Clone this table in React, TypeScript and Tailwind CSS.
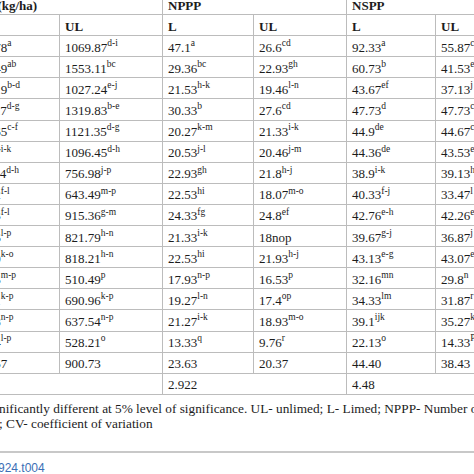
type Cell = [string, string?];

const rows: Cell[][] = [
  [["1580.78", "a"], ["1069.87", "d-i"], ["47.1", "a"], ["26.6", "cd"], ["92.33", "a"], ["55.87", "c"]],
  [["1437.49", "ab"], ["1553.11", "bc"], ["29.36", "bc"], ["22.93", "gh"], ["60.73", "b"], ["41.53", "e"]],
  [["1309.19", "b-d"], ["1027.24", "e-j"], ["21.53", "h-k"], ["19.46", "l-n"], ["43.67", "ef"], ["37.13", "j"]],
  [["1191.27", "d-g"], ["1319.83", "b-e"], ["30.33", "b"], ["27.6", "cd"], ["47.73", "d"], ["47.73", "c"]],
  [["1227.65", "c-f"], ["1121.35", "d-g"], ["20.27", "k-m"], ["21.33", "i-k"], ["44.9", "de"], ["44.67", "c"]],
  [["983.17", "i-k"], ["1096.45", "d-h"], ["20.53", "j-l"], ["20.46", "j-m"], ["44.36", "de"], ["43.53", "e"]],
  [["1112.54", "d-h"], ["756.98", "j-p"], ["22.93", "gh"], ["21.8", "h-j"], ["38.9", "i-k"], ["39.13", "h"]],
  [["836.42", "f-l"], ["643.49", "m-p"], ["22.53", "hi"], ["18.07", "m-o"], ["40.33", "f-j"], ["33.47", "l"]],
  [["858.13", "f-l"], ["915.36", "g-m"], ["24.33", "fg"], ["24.8", "ef"], ["42.76", "e-h"], ["42.26", "e"]],
  [["712.36", "l-p"], ["821.79", "h-n"], ["21.33", "i-k"], ["18nop"], ["39.67", "g-j"], ["36.87", "j"]],
  [["784.90", "k-o"], ["818.21", "h-n"], ["22.53", "hi"], ["21.93", "h-j"], ["43.13", "e-g"], ["43.07", "e"]],
  [["621.55", "m-p"], ["510.49", "p"], ["17.93", "n-p"], ["16.53", "p"], ["32.16", "mn"], ["29.8", "n"]],
  [["687.21", "k-p"], ["690.96", "k-p"], ["19.27", "l-n"], ["17.4", "op"], ["34.33", "lm"], ["31.87", "r"]],
  [["655.38", "n-p"], ["637.54", "n-p"], ["21.27", "i-k"], ["18.93", "m-o"], ["39.1", "ijk"], ["35.27", "k"]],
  [["603.44", "l-p"], ["528.21", "o"], ["13.33", "q"], ["9.76", "r"], ["22.13", "o"], ["14.33", "P"]],
  [["1001.57"], ["900.73"], ["23.63"], ["20.37"], ["44.40"], ["38.43"]],
];

const td = "h-[21.1px] border border-[#bcbcbc] pl-[5px] pr-1 pt-[2px] pb-0 align-middle whitespace-nowrap";
const th = td + " font-bold";

export default function App() {
  return (
    <div className="w-[474px] h-[474px] overflow-hidden bg-white text-[#1c1c1c] font-['Liberation_Serif',serif]">
      <div className="-ml-[41px] -mt-[7px]">
        <table className="table-fixed border-collapse text-[13px] leading-[15px] w-[566px]">
          <colgroup>
            <col className="w-[100px]" />
            <col className="w-[103px]" />
            <col className="w-[91px]" />
            <col className="w-[93px]" />
            <col className="w-[89px]" />
            <col className="w-[90px]" />
          </colgroup>
          <thead>
            <tr>
              <th colSpan={2} className={th + " text-left"}>Yield (kg/ha)</th>
              <th colSpan={2} className={th + " text-left"}>NPPP</th>
              <th colSpan={2} className={th + " text-left"}>NSPP</th>
            </tr>
            <tr>
              {["L", "UL", "L", "UL", "L", "UL"].map((h, i) => (
                <th key={i} className={th + " text-left"}>{h}</th>
              ))}
            </tr>
          </thead>
          <tbody>
            {rows.map((r, i) => (
              <tr key={i}>
                {r.map(([v, s], j) => (
                  <td key={j} className={td}>
                    {v}
                    {s && <sup className="text-[9.5px] -top-[0.6em]">{s}</sup>}
                  </td>
                ))}
              </tr>
            ))}
            <tr>
              <td colSpan={2} className={td}></td>
              <td colSpan={2} className={td}>2.922</td>
              <td colSpan={2} className={td}>4.48</td>
            </tr>
          </tbody>
        </table>
      </div>

      <div className="mt-[6px] text-[13.3px] leading-[15px] whitespace-nowrap">
        <p className="-ml-[1px]">nificantly different at 5% level of significance. UL- unlimed; L- Limed; NPPP- Number of pods per plant;</p>
        <p className="-ml-[1px]">; CV- coefficient of variation</p>
      </div>

      <div className="mt-[20px] border-t-2 border-[#c8c8c8]" />
      <div className="mt-[8px] -ml-[2px] text-[12px] leading-[14px] text-[#3b6fb6] font-['Liberation_Sans',sans-serif]">924.t004</div>
    </div>
  );
}
